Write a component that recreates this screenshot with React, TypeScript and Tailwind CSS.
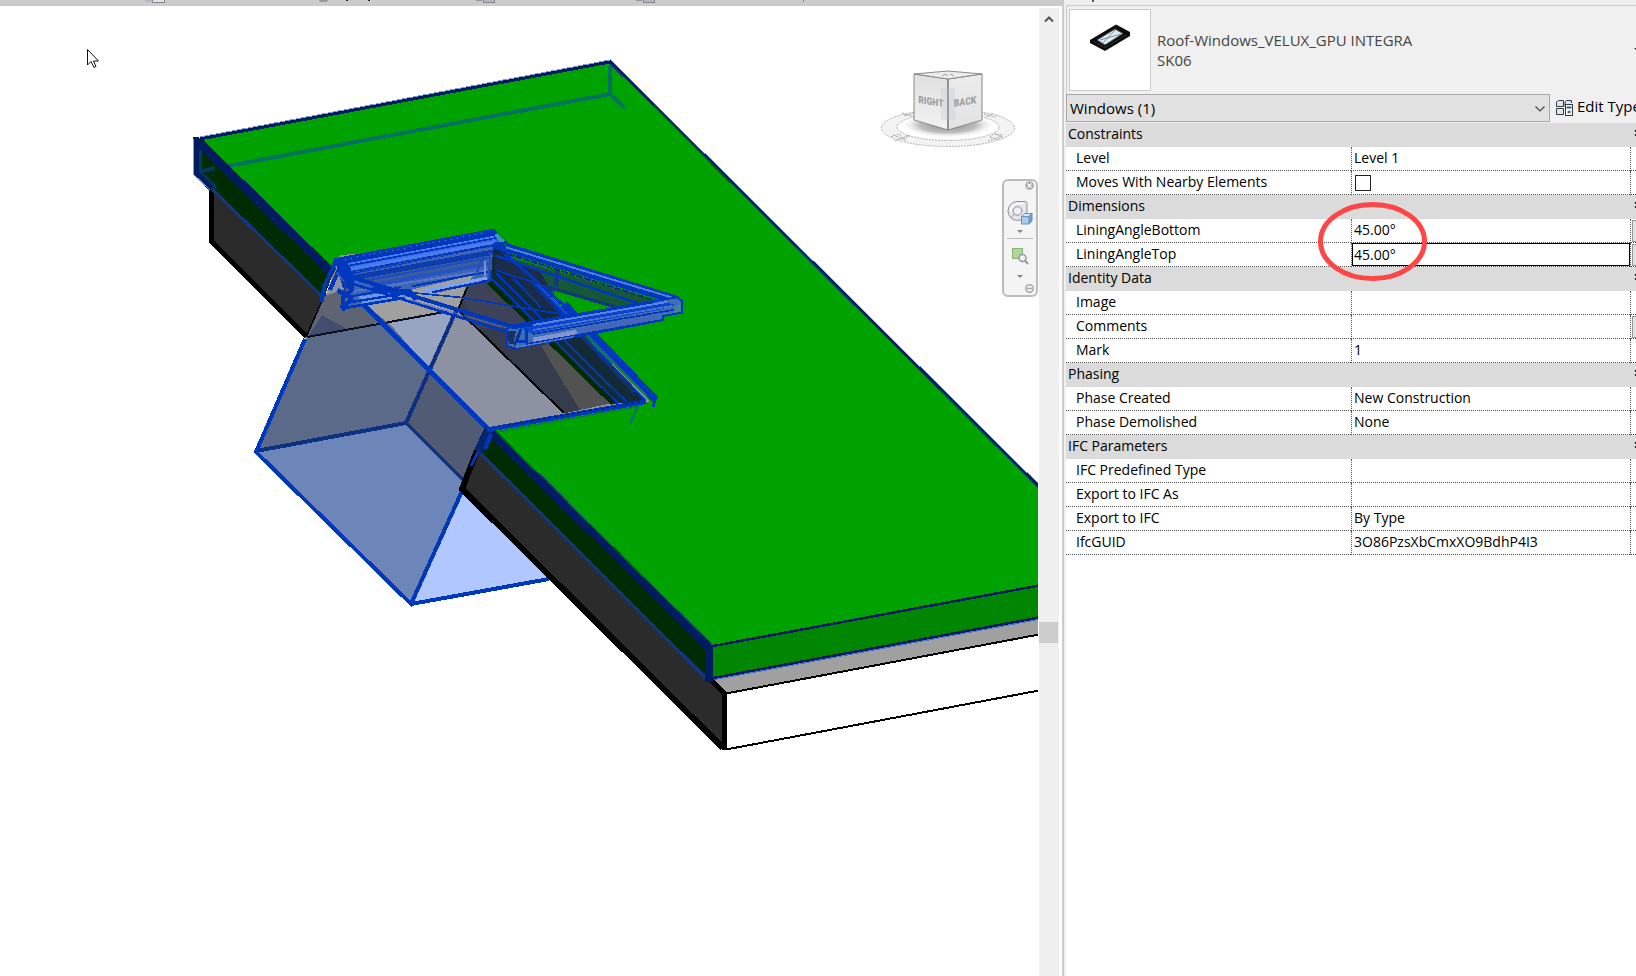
import React, { useState } from "react";

type Row = {
  id: string;
  label: string;
  value: string;
  kind?: "check" | "active";
  button?: boolean;
};

type Group = { title: string; rows: Row[] };

const GROUPS: Group[] = [
  {
    title: "Constraints",
    rows: [
      { id: "level", label: "Level", value: "Level 1" },
      { id: "moves", label: "Moves With Nearby Elements", value: "", kind: "check" },
    ],
  },
  {
    title: "Dimensions",
    rows: [
      { id: "angle-bottom", label: "LiningAngleBottom", value: "45.00°", button: true },
      { id: "angle-top", label: "LiningAngleTop", value: "45.00°", kind: "active", button: true },
    ],
  },
  {
    title: "Identity Data",
    rows: [
      { id: "image", label: "Image", value: "" },
      { id: "comments", label: "Comments", value: "", button: true },
      { id: "mark", label: "Mark", value: "1" },
    ],
  },
  {
    title: "Phasing",
    rows: [
      { id: "created", label: "Phase Created", value: "New Construction" },
      { id: "demolished", label: "Phase Demolished", value: "None" },
    ],
  },
  {
    title: "IFC Parameters",
    rows: [
      { id: "ifc-type", label: "IFC Predefined Type", value: "" },
      { id: "ifc-as", label: "Export to IFC As", value: "" },
      { id: "ifc-export", label: "Export to IFC", value: "By Type" },
      { id: "ifc-guid", label: "IfcGUID", value: "3O86PzsXbCmxXO9BdhP4I3" },
    ],
  },
];

const BLUE = "#0038bd";
const NAVY = "#001c60";

/* Skylight frame and its opened sash, drawn at three units to the pixel. */
function WindowFrame() {
  return (
    <g transform="translate(300 210) scale(0.33333)" fill="none" stroke={BLUE} strokeLinecap="square">
      {/* right reveal, looking down into the opening */}
      <polygon points="575,110 600,110 1040,572 940,582 560,212" fill="#132a38" stroke="none" />
      <polygon points="585,165 700,215 800,310 745,310" fill="#1b2b47" stroke="none" />
      <path d="M566 214 L940 580" stroke="#002a00" strokeWidth="16" strokeLinecap="butt" />
      <path d="M590 192 L978 574 M578 210 L952 578 M604 165 L720 290" strokeWidth="6" />
      <path d="M610 130 L1000 545" stroke="#132f78" strokeWidth="8" />
      <path d="M625 140 L1030 565" strokeWidth="6" />
      <path d="M650 165 L1045 555" strokeWidth="10" />
      <path d="M800 290 L1060 562" strokeWidth="22" />
      <path d="M690 200 L1042 558" stroke="#4f74cc" strokeWidth="3" strokeDasharray="9 3" />
      <path d="M1045 558 L1066 568 L1060 588" strokeWidth="8" />
      <path d="M1016 582 L990 642" stroke="#00766a" strokeWidth="8" strokeLinecap="butt" />

      {/* glass of the opened sash */}
      <polygon points="610,135 1060,272 950,292 770,240 690,200" fill="#145838" stroke="none" />
      <polygon points="590,130 720,185 760,250 700,215 585,180" fill="#1d2c4a" stroke="none" />
      <path d="M772 180 L766 240" stroke="#14387c" strokeWidth="14" strokeLinecap="butt" />
      <path d="M766 232 L750 262" strokeWidth="10" stroke="#14469a" />
      <path d="M620 135 L830 320" strokeWidth="9" />
      <path d="M590 182 L700 216" strokeWidth="5" />
      <path d="M740 230 L950 292" stroke="#14387c" strokeWidth="10" />

      {/* underside of the head member */}
      <polygon points="150,190 580,110 572,212 140,296" fill="#3d66b8" stroke="none" />
      <polygon points="190,205 560,135 560,160 225,225" fill="#3c5c9c" stroke="none" />
      <polygon points="330,240 520,195 500,232 300,262" fill="#a0a0a0" stroke="none" />
      <polygon points="175,260 310,240 320,262 190,285" fill="#6f98e4" stroke="none" />
      <polygon points="360,240 560,200 560,212 380,250" fill="#7fa2ea" stroke="none" />
      <path d="M150 205 L572 128" stroke="#0c3cae" strokeWidth="16" />
      <path d="M180 215 L570 142" stroke="#1a4cc4" strokeWidth="6" />
      <path d="M215 226 L570 160" stroke="#2554c0" strokeWidth="12" />
      <path d="M150 245 L570 180" stroke="#5a78c4" strokeWidth="5" />
      <path d="M160 258 L300 232 M340 228 L570 184" strokeWidth="6" />
      <path d="M160 275 L330 248 M400 246 L566 212" strokeWidth="7" />
      <path d="M140 293 L310 264" strokeWidth="8" />
      <path d="M545 150 L530 190 M570 130 L568 212" strokeWidth="7" stroke="#2450b4" />
      <path d="M556 155 L556 195" stroke="#7a93cc" strokeWidth="6" strokeDasharray="6 6" />
      <path d="M572 185 L572 210 L548 214" strokeWidth="6" />

      {/* head member */}
      <polygon points="108,148 580,60 618,98 150,190" fill={BLUE} strokeWidth="8" />
      <path d="M152 176 L590 93" stroke="#4a7cf0" strokeWidth="14" strokeLinecap="butt" />
      <path d="M144 162 L582 80" stroke="#4a7cf0" strokeWidth="5" strokeLinecap="butt" />
      <path d="M150 170 L590 88" stroke="#2858d8" strokeWidth="3" strokeDasharray="15 6" />
      <path d="M135 148 L570 66" stroke="#5f97c8" strokeWidth="3" strokeDasharray="3 15" strokeLinecap="butt" />
      <path d="M165 186 L575 110" stroke="#3556b0" strokeWidth="3" strokeDasharray="15 6" strokeLinecap="butt" />
      <polygon points="583,74 592,70 616,94 596,96" fill="#3c98b0" stroke="none" />

      {/* left hinge bracket */}
      <polygon points="104,150 130,148 165,205 158,240 128,232" fill={BLUE} stroke="none" />
      <path d="M108 150 L72 232 M125 160 L92 235 M72 232 L66 270" strokeWidth="12" />
      <path d="M104 176 L80 228" stroke="#15306a" strokeWidth="7" />
      <path d="M120 150 L150 190 L156 240 L128 262 L132 296" strokeWidth="12" />
      <path d="M112 190 L130 212" stroke="#2f5ac4" strokeWidth="5" />
      <path d="M118 244 L152 262 M128 290 L155 270" strokeWidth="14" />
      <path d="M136 214 L136 252" stroke="#174098" strokeWidth="5" strokeDasharray="8 5" />

      {/* left stile of the sash */}
      <path d="M150 200 L645 352" strokeWidth="12" />
      <path d="M160 222 L640 372" strokeWidth="8" />
      <path d="M330 270 L640 360" stroke="#4a70c8" strokeWidth="3" strokeDasharray="36 6" />
      <path d="M250 240 L480 262 L800 315" strokeWidth="5" />
      <path d="M225 240 L330 246 L345 262" strokeWidth="16" />

      {/* right stile of the sash */}
      <path d="M590 108 L1120 272" strokeWidth="20" />
      <path d="M620 104 L1130 262" strokeWidth="10" />
      <path d="M618 112 L1120 264" stroke="#4a80d8" strokeWidth="6" strokeLinecap="butt" />
      <path d="M600 125 L1080 276" stroke="#122e70" strokeWidth="6" strokeDasharray="21 3" strokeLinecap="butt" />
      <path d="M590 138 L1010 278" strokeWidth="8" />

      {/* front rail of the sash */}
      <polygon points="640,345 1130,262 1146,272 1146,308 1090,318 1090,330 645,415 620,408 620,358" fill="#3e6fb4" strokeWidth="6" />
      <polygon points="662,352 1090,276 1125,284 1085,298 690,370" fill="#0e45cc" stroke="none" />
      <path d="M640 352 L1060 278" strokeWidth="12" />
      <path d="M700 345 L1100 276" stroke="#5585e0" strokeWidth="6" strokeLinecap="butt" />
      <path d="M700 360 L1115 288" stroke="#4674d0" strokeWidth="5" strokeLinecap="butt" />
      <path d="M700 372 L1130 298" strokeWidth="5" />
      <path d="M700 390 L830 366" stroke="#8295cf" strokeWidth="14" strokeLinecap="butt" />
      <path d="M830 364 L1070 322" stroke="#4566ba" strokeWidth="16" strokeLinecap="butt" />
      <path d="M680 402 L1085 330" strokeWidth="5" />
      <path d="M650 412 L820 380" stroke="#5878c8" strokeWidth="4" />
      <polygon points="1126,288 1142,282 1142,304 1120,308" fill="#3a8a96" stroke="none" />
      <polygon points="624,362 648,362 640,404 626,400" fill="#1d2e60" stroke="none" />
      <path d="M662 360 L650 395 L680 396 L678 360" strokeWidth="9" />
      <path d="M656 370 L644 404" stroke="#132e70" strokeWidth="6" />

      {/* sill */}
      <path d="M568 658 L1032 576" strokeWidth="14" />
      <path d="M620 646 L1026 574" stroke="#001c60" strokeWidth="3" strokeDasharray="9 9" strokeLinecap="butt" />
      <path d="M600 664 L1010 590" stroke="#14645c" strokeWidth="3" />
    </g>
  );
}

function RoofModel() {
  return (
    <svg
      viewBox="0 6 1038 970"
      preserveAspectRatio="xMinYMin slice"
      className="block size-full"
      shapeRendering="crispEdges"
      role="img"
      aria-label="3D view of a roof with a selected roof window"
    >
      {/* wall under the eaves */}
      <polygon points="714,680 1039,619 1039,635 726,694" fill="#a0a0a0" />
      <polygon points="726,694 1039,635 1039,691 726,750" fill="#ffffff" />
      <path d="M726 693.500 L1039 634.500 M726 749.500 L1039 690.500" stroke="#000" strokeWidth="2" />

      {/* covering */}
      <polygon points="197,138 610,62 1039,486 1039,586 713,646" fill="#00a200" />
      <polygon points="713,646 1039,586 1039,618 713,679" fill="#008600" />
      <path d="M200 138 L610 61 L1039 486" fill="none" stroke="#7f9ddc" strokeWidth="3" />
      <path d="M200 139 L610 62 L1039 487" fill="none" stroke={NAVY} strokeWidth="3" />
      <path d="M611 64 L1039 489" fill="none" stroke="#00604a" strokeWidth="1" />
      <path d="M228 166 L610 94 M610 66 L610 94 L625 108" fill="none" stroke="#00705f" strokeWidth="4" />
      <path d="M713 679.500 L1039 619" stroke="#4f74c4" strokeWidth="2" />
      <path d="M713 646 L1039 585.500 M713 678 L1039 617.500" stroke={NAVY} strokeWidth="2.500" />

      {/* left end, upper part */}
      <polygon points="211,185 328,295 307,337 211,242" fill="#2b2b2b" />
      <polygon points="200,146 332,276 324,298 212,189 199,176" fill="#002a00" />
      <path d="M199 172 L215 168 M200 148 L200 173 L216 188" fill="none" stroke="#003a5c" strokeWidth="4" />
      <path d="M211 189 L211 241 L307 337" fill="none" stroke="#000" strokeWidth="5" />
      <path d="M308 338 L326 298" stroke="#000" strokeWidth="6" />
      <path d="M210 187 L324 298" stroke="#15357f" strokeWidth="3" />
      <path d="M332 273 L198 141" fill="none" stroke={NAVY} strokeWidth="9" />
      <path d="M196 137 L196 173 L212 189" fill="none" stroke={NAVY} strokeWidth="6" />
      <path d="M193 139 L193 174 L210 190" fill="none" stroke="#7f9ddc" strokeWidth="1" />

      {/* opening */}
      <polygon points="325,297 340,255 495,245 650,402 488,430 440,385" fill="#8c92a2" />
      <polygon points="325,296 355,285 388,321 307,337" fill="#5e6472" />
      <polygon points="322,315 347,329 308,337" fill="#414e6f" />
      <polygon points="352,294 470,272 457,312 387,322" fill="#a0a0a0" />
      <polygon points="387,322 457,311 430,370" fill="#97a4c2" />
      <polygon points="430,370 457,310 467,318 565,413 488,429" fill="#8c92a2" />
      <polygon points="459,309 472,275 492,272 545,340 580,410 565,413 467,318" fill="#363c4c" />
      <polygon points="464,300 472,275 492,272 545,325 478,328" fill="#3d4259" />
      <polygon points="541,346 550,343 613,403 580,410" fill="#525252" />

      {/* lining volume */}
      <polygon points="255,452 307,337 388,322 430,370 406,423" fill="#5c6a8a" />
      <polygon points="430,370 488,430 463,481 406,423" fill="#525b74" />
      <polygon points="255,452 406,423 463,480 462,492 411,605" fill="#6c86ba" />
      <polygon points="462,491 548,579 411,605" fill="#b0c8ff" />
      <path d="M307 337 L447 311.500" stroke="#0a0e1c" strokeWidth="2" />
      <path d="M472 275 L458 310 L564 413" fill="none" stroke="#000" strokeWidth="2" />
      <path d="M256 451 L406 423 L463 480 M406 423 L456 311" fill="none" stroke="#0d3080" strokeWidth="4" />
      <path d="M406 425 L463 482" fill="none" stroke="#3a5ca8" strokeWidth="1" />
      <path d="M352 293 L489 430" stroke={BLUE} strokeWidth="5" />
      <path d="M305 339 L256 452 L411 604 L463 489 M411 604 L549 579" fill="none" stroke={BLUE} strokeWidth="4" />

      {/* left end, lower part */}
      <polygon points="479,446 712,676 724,694 724,750 463,490" fill="#2b2b2b" />
      <polygon points="490,433 706,647 706,677 479,451" fill="#002a00" />
      <path d="M478 448 L462 489 L723 748" fill="none" stroke="#000" strokeWidth="6" />
      <path d="M724 750 L724 693 L712 681" fill="none" stroke="#000" strokeWidth="5" />
      <path d="M479 452 L707 679" stroke="#15357f" strokeWidth="3" />
      <path d="M490 431 L709 647" stroke={NAVY} strokeWidth="9" />
      <path d="M709 645 L709 682" stroke={NAVY} strokeWidth="8" />
      <path d="M496 432 L714 646" stroke="#00604a" strokeWidth="1" />
      <path d="M489 429 L478 452" stroke="#05266e" strokeWidth="9" />
      <path d="M491 434 L485 449" stroke={BLUE} strokeWidth="4" />
      <path d="M478 452 L471 466" stroke={BLUE} strokeWidth="3" />

      <WindowFrame />
    </svg>
  );
}

function ViewCube() {
  return (
    <svg width="136" height="82" viewBox="880 68 136 82" role="img" aria-label="View cube">
      <defs>
        <linearGradient id="cube-left" x1="0" y1="0" x2="0" y2="1">
          <stop offset="0" stopColor="#e0e0e0" />
          <stop offset="1" stopColor="#f2f2f2" />
        </linearGradient>
        <linearGradient id="cube-right" x1="0" y1="0" x2="0" y2="1">
          <stop offset="0" stopColor="#ececec" />
          <stop offset="1" stopColor="#e2e2e2" />
        </linearGradient>
        <radialGradient id="cube-shadow">
          <stop offset="0" stopColor="#8c8c8c" />
          <stop offset="0.600" stopColor="#c0c0c0" />
          <stop offset="1" stopColor="#fff" stopOpacity="0" />
        </radialGradient>
      </defs>
      <ellipse cx="948" cy="128" rx="66.500" ry="18.500" fill="#f3f3f3" stroke="#b4b4b4" strokeDasharray="2 1" />
      <ellipse cx="948" cy="127" rx="51" ry="13.500" fill="#fff" stroke="#b4b4b4" strokeDasharray="2 1" />
      <ellipse cx="948" cy="125" rx="48" ry="13" fill="url(#cube-shadow)" />
      <g stroke="#a8a8a8" fill="none" strokeDasharray="2 1">
        <path d="M891 137 l8 -3 4 5 8 -4 M895 141 l14 -6 M893 135 l14 6" />
        <path d="M990 137 l8 3 4 -5 -8 -1 z M988 141 l14 -5 M996 134 l8 4" />
        <path d="M902 113 l12 4 M904 116 l10 -3 M984 114 l10 3 4 -3 M986 117 l8 -4" />
      </g>
      <polygon points="914,74 948,79 948,130 914,120" fill="url(#cube-left)" stroke="#8a8a8a" />
      <polygon points="948,79 982,74 982,120 948,130" fill="url(#cube-right)" stroke="#8a8a8a" />
      <polygon points="914,74 948,71 982,74 948,79" fill="#ececec" stroke="#8a8a8a" />
      <path d="M942 76 l4 -2 2 2 M950 74 l4 2" fill="none" stroke="#a0a0a0" />
      <rect x="941" y="88" width="14" height="32" fill="#cfd5dc" opacity="0.500" />
      <path d="M948 79 V130" stroke="#777" />
      <g fill="#9b9da1" fontSize="10" fontWeight="700" fontFamily="'Liberation Sans Narrow', 'Roboto Condensed', 'Liberation Sans', sans-serif" textAnchor="middle">
        <text transform="translate(931 105) skewY(9)">RIGHT</text>
        <text transform="translate(965 105) skewY(-9)">BACK</text>
      </g>
    </svg>
  );
}

function NavigationBar() {
  return (
    <div className="flex h-[118px] w-9 flex-col items-center rounded-md border-2 border-[#bcbcbc] bg-[#f4f4f4]">
      <button aria-label="Close" className="mr-0.5 self-end">
        <svg width="9" height="9" viewBox="0 0 9 9" className="block">
          <circle cx="4.500" cy="4.500" r="4.300" fill="#a9a9a9" />
          <path d="M2.500 2.500 L6.500 6.500 M6.500 2.500 L2.500 6.500" stroke="#fff" strokeWidth="1.200" />
        </svg>
      </button>
      <button aria-label="Steering wheel" className="mt-2">
        <svg width="26" height="28" viewBox="0 0 26 28" className="block">
          <path d="M10 3.500 H18 Q20 3.500 20 5.500 V13 A9.500 9.500 0 1 1 10 3.500 Z" fill="#e4e5e8" stroke="#8d9096" />
          <path d="M10 5.500 H17 M3.500 13 A7 7 0 0 1 10 6" fill="none" stroke="#fff" strokeWidth="1.500" />
          <circle cx="10.500" cy="13" r="4.300" fill="#f0f1f3" stroke="#8d9096" />
          <path d="M7.500 16 L4 19.500" stroke="#8d9096" />
          <path d="M14.500 18.500 L18 15.500 H25 L22 18.500 Z" fill="#d6ebfa" stroke="#6a94bd" />
          <path d="M22 18.500 L25 15.500 V23 L22 26 Z" fill="#7aa6d0" stroke="#5d89b5" />
          <rect x="14.500" y="18.500" width="7.500" height="7.500" fill="#a9cbeb" stroke="#6a94bd" />
        </svg>
      </button>
      <button aria-label="Steering wheel options" className="flex h-3 items-center">
        <svg width="6" height="3" viewBox="0 0 6 3"><path d="M0 0 H6 L3 3 Z" fill="#858585" /></svg>
      </button>
      <hr className="w-[26px] border-t border-[#bcbcbc]" />
      <button aria-label="Zoom region" className="mt-2">
        <svg width="18" height="18" viewBox="0 0 18 18" className="block">
          <rect x="1.500" y="1.500" width="10" height="10" fill="#b4d3a0" stroke="#86b36e" />
          <circle cx="11.500" cy="11" r="3.500" fill="#eef3f5" stroke="#97999c" strokeWidth="1.500" />
          <path d="M14 13.500 L17 17" stroke="#97999c" strokeWidth="2" />
        </svg>
      </button>
      <button aria-label="Zoom options" className="mt-1 flex h-4 items-center">
        <svg width="6" height="3" viewBox="0 0 6 3"><path d="M0 0 H6 L3 3 Z" fill="#858585" /></svg>
      </button>
      <button aria-label="Collapse" className="mt-auto mr-0.5 mb-0.5 self-end">
        <svg width="9" height="9" viewBox="0 0 9 9" className="block">
          <circle cx="4.500" cy="4.500" r="3.700" fill="none" stroke="#a9a9a9" strokeWidth="1.500" />
          <path d="M2 4.500 H7" stroke="#a9a9a9" strokeWidth="1.500" />
        </svg>
      </button>
    </div>
  );
}

function ToolbarEdge() {
  return (
    <div className="h-[6px] shrink-0 bg-[#cbcbcb]">
      <svg width="840" height="6" viewBox="0 0 840 6" className="block" shapeRendering="crispEdges" aria-hidden="true">
        <path d="M145 0 H152 V2 H145 Z" fill="#b5b8bb" />
        <rect x="152" y="-2" width="12" height="4" fill="#dfe1e3" stroke="#85888e" />
        <path d="M318 0 H329 L326 2 H321 Z" fill="#9a9a9e" />
        <rect x="346" y="0" width="2" height="1" fill="#222" />
        <rect x="368" y="0" width="2" height="1" fill="#222" />
        <path d="M476 0 H482 V1 H476 Z" fill="#8f9297" />
        <rect x="483" y="-2" width="11" height="4" fill="#b5b8bb" stroke="#85888e" />
        <path d="M636 0 H642 V1 H636 Z" fill="#8f9297" />
        <rect x="643" y="-2" width="11" height="4" fill="#b5b8bb" stroke="#85888e" />
        <rect x="803" y="0" width="1" height="2" fill="#888" />
      </svg>
    </div>
  );
}

function DrawingArea() {
  return (
    <main className="flex min-w-0 flex-1 flex-col">
      <ToolbarEdge />
      <div className="flex min-h-0 flex-1">
        <div className="relative mr-px min-w-0 flex-1 overflow-hidden bg-white">
          <RoofModel />
          <div className="absolute top-[62px] right-[22px]">
            <ViewCube />
          </div>
          <div className="absolute top-[173px] right-0">
            <NavigationBar />
          </div>
          <svg width="13" height="20" viewBox="0 0 13 20" className="absolute top-[43px] left-[87px]" aria-hidden="true">
            <path d="M0.500 0.500 V16 L4 12.500 L7 18.500 L9 17.500 L6.500 12 H11.500 Z" fill="#fff" stroke="#111" />
          </svg>
        </div>
        <div className="mt-0.5 mr-[3px] flex w-5 flex-col bg-[#efefef]">
          <button aria-label="Scroll up" className="flex h-[22px] items-center justify-center">
            <svg width="10" height="7" viewBox="0 0 10 7"><path d="M1 5.500 L5 1.500 L9 5.500" fill="none" stroke="#555" strokeWidth="2" /></svg>
          </button>
          <div className="grow-[591]" />
          <div className="h-[21px] w-[19px] bg-[#cdcdcd]" />
          <div className="grow-[333]" />
        </div>
      </div>
    </main>
  );
}

function PropertyRow({ row }: { row: Row }) {
  const [checked, setChecked] = useState(false);
  return (
    <tr className="h-6">
      <th scope="row" className="h-6 border-b border-dotted border-[#555] p-0 pl-[10px] text-left font-normal">
        <label htmlFor={row.id} className="block h-[23px] leading-[21px] whitespace-nowrap">{row.label}</label>
      </th>
      <td className="h-6 border-b border-l border-dotted border-[#555] p-0">
        {row.kind === "check" ? (
          <input
            id={row.id}
            type="checkbox"
            checked={checked}
            onChange={(e) => setChecked(e.target.checked)}
            className="ml-[3px] block size-4 appearance-none border border-[#222] bg-white checked:bg-[#333]"
          />
        ) : (
          <input
            id={row.id}
            defaultValue={row.value}
            className={
              row.kind === "active"
                ? "block h-[23px] w-full border border-black bg-white pb-px pl-px leading-5 outline-none"
                : "block h-[23px] w-full bg-white pb-0.5 pl-[2px] leading-5 outline-none"
            }
          />
        )}
      </td>
      <td className="h-6 border-b border-l border-dotted border-[#555] p-0 pl-px">
        {row.button && (
          <button aria-label={`Associate ${row.label}`} className="block h-[22px] w-5 border border-[#999] bg-[#e1e1e1]" />
        )}
      </td>
    </tr>
  );
}

function PropertyGroup({ group }: { group: Group }) {
  const [open, setOpen] = useState(true);
  return (
    <tbody>
      <tr className="h-6 bg-[#dbdbdb]">
        <th colSpan={3} scope="colgroup" className="h-6 p-0 text-left font-normal">
          <div className="flex h-6 items-start justify-between pl-[2px]">
            <span className="leading-[22px]">{group.title}</span>
            <button aria-label={`Collapse ${group.title}`} onClick={() => setOpen(!open)} className="mt-1 mr-4">
              <svg width="8" height="9" viewBox="0 0 8 9" fill="none" stroke="#111" strokeWidth="1.500" className="block">
                <path d="M1 4.500 L4 1.500 L7 4.500 M1 8.500 L4 5.500 L7 8.500" />
              </svg>
            </button>
          </div>
        </th>
      </tr>
      {open && group.rows.map((row) => <PropertyRow key={row.id} row={row} />)}
    </tbody>
  );
}

function FamilyThumbnail() {
  return (
    <div className="flex size-[82px] shrink-0 justify-center border border-[#cbcbcb] bg-white pt-[14px]">
      <svg width="42" height="28" viewBox="0 0 42 28" role="img" aria-label="Roof window">
        <path d="M1 16 L27 0.500 L41 8 V12 L16 27 L1 19 Z" fill="#0b0b0b" />
        <path d="M8 16 L26 5 L34 9.500 L16 21 Z" fill="#dcebf3" stroke="#4b5258" />
        <path d="M11 16 L34 9.500 M14 19 L26 6" stroke="#6c757c" strokeWidth="0.800" />
        <path d="M4 17 L16 23.500 L38 10.500" fill="none" stroke="#3a3a3a" strokeWidth="0.800" />
      </svg>
    </div>
  );
}

function PropertiesPanel() {
  return (
    <aside aria-label="Properties" className="flex w-[574px] shrink-0 flex-col overflow-hidden border-l-2 border-[#cbcbcb] bg-[#f0f0f0] pl-[2px]">
      <div className="h-[5px] shrink-0 pl-[26px]">
        <div className="h-0.5 w-0.5 bg-[#555]" />
      </div>
      <div className="flex h-[89px] shrink-0 items-start border-t border-l border-[#cbcbcb] pt-[3px] pl-[2px]">
        <FamilyThumbnail />
        <p className="mt-[21px] ml-[6px] flex-1 text-[15px] leading-5 text-[#444]">
          Roof-Windows_VELUX_GPU INTEGRA
          <br />
          SK06
        </p>
        <svg width="8" height="5" viewBox="0 0 8 5" className="mt-[39px] -mr-[6px]" aria-hidden="true"><path d="M0 0 H8 L4 4 Z" fill="#333" /></svg>
      </div>
      <div className="flex h-[29px] shrink-0">
        <div className="relative h-7 w-[484px] shrink-0">
          <select aria-label="Element filter" className="size-full appearance-none border border-[#a8a8a8] bg-[#e1e1e1] pl-[3px] text-[15px] outline-none">
            <option>Windows (1)</option>
          </select>
          <svg width="10" height="6" viewBox="0 0 10 6" className="pointer-events-none absolute top-3 right-[5px]" aria-hidden="true">
            <path d="M0.500 0.500 L5 5 L9.500 0.500" fill="none" stroke="#444" strokeWidth="1.200" />
          </svg>
        </div>
        <button className="ml-[6px] flex h-[26px] shrink-0 items-center gap-1 whitespace-nowrap">
          <svg width="17" height="17" viewBox="0 0 17 17" fill="none" stroke="#333a48" aria-hidden="true">
            <path d="M0.500 3 L2.500 1.500 H7.500 V7.500 H0.500 Z M9 7.500 V3 L10.500 1.500 H15.500 V4 M0.500 9.500 H7.500 V15.500 H0.500 Z" fill="#e2e5ea" />
            <rect x="9.500" y="5.500" width="7" height="11" fill="#fff" />
            <path d="M10.500 8.500 H15.500" stroke="#1d5fa8" strokeWidth="2" />
            <path d="M11.500 13 H15 M13 11.500 V14.500" stroke="#333a48" />
          </svg>
          <span className="pb-0.5 text-[15px]">Edit Type</span>
        </button>
      </div>
      <div className="relative flex-1 bg-white">
        <table className="w-[592px] table-fixed border-separate border-spacing-0 bg-white text-sm">
          <colgroup>
            <col className="w-[285px]" />
            <col className="w-[279px]" />
            <col />
          </colgroup>
          {GROUPS.map((group) => (
            <PropertyGroup key={group.title} group={group} />
          ))}
        </table>
        <svg width="110" height="80" viewBox="0 0 110 80" className="pointer-events-none absolute top-[79px] left-[252px]" aria-hidden="true">
          <ellipse cx="54.500" cy="39.500" rx="52" ry="37" fill="none" stroke="#ff4545" strokeWidth="5" />
        </svg>
      </div>
    </aside>
  );
}

export default function App() {
  return (
    <div className="flex h-screen overflow-hidden bg-white font-['Open_Sans','Noto_Sans',sans-serif] text-black">
      <DrawingArea />
      <PropertiesPanel />
    </div>
  );
}
